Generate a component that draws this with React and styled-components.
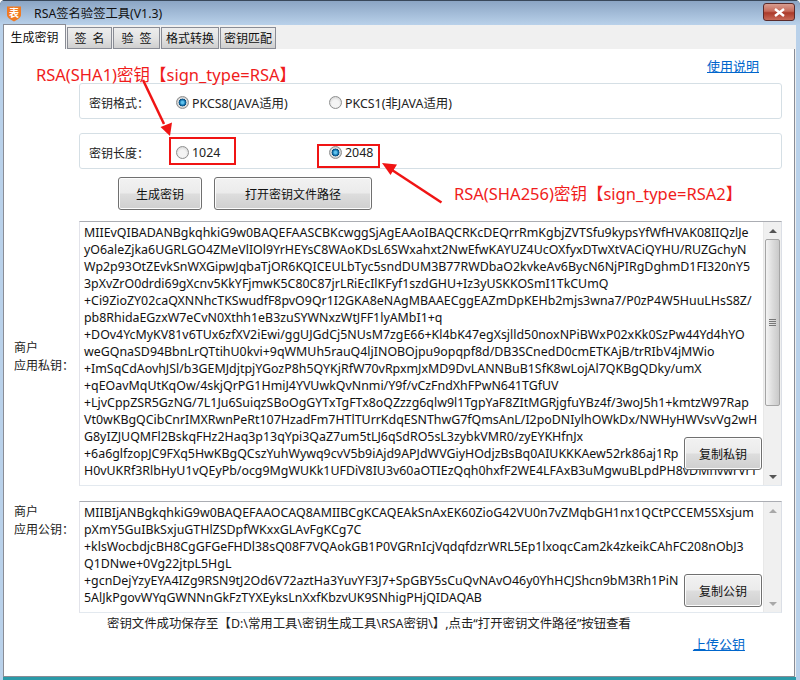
import React from 'react'
import styled, { createGlobalStyle } from 'styled-components'

const privateKey = [
  'MIIEvQIBADANBgkqhkiG9w0BAQEFAASCBKcwggSjAgEAAoIBAQCRKcDEQrrRmKgbjZVTSfu9kypsYfWfHVAK08IIQzlJe',
  'yO6aleZjka6UGRLGO4ZMeVlIOl9YrHEYsC8WAoKDsL6SWxahxt2NwEfwKAYUZ4UcOXfyxDTwXtVACiQYHU/RUZGchyN',
  'Wp2p93OtZEvkSnWXGipwJqbaTjOR6KQICEULbTyc5sndDUM3B77RWDbaO2kvkeAv6BycN6NjPIRgDghmD1FI320nY5',
  '3pXvZrO0drdi69gXcnv5KkYFjmwK5C80C87jrLRiEcIlKFyf1szdGHU+Iz3yUSKKOSmI1TkCUmQ',
  '+Ci9ZioZY02caQXNNhcTKSwudfF8pvO9Qr1I2GKA8eNAgMBAAECggEAZmDpKEHb2mjs3wna7/P0zP4W5HuuLHsS8Z/',
  'pb8RhidaEGzxW7eCvN0Xthh1eB3zuSYWNxzWtJFF1lyAMbI1+q',
  '+DOv4YcMyKV81v6TUx6zfXV2iEwi/ggUJGdCj5NUsM7zgE66+Kl4bK47egXsjlld50noxNPiBWxP02xKk0SzPw44Yd4hYO',
  'weGQnaSD94BbnLrQTtihU0kvi+9qWMUh5rauQ4ljINOBOjpu9opqpf8d/DB3SCnedD0cmETKAjB/trRIbV4jMWio',
  '+ImSqCdAovhJSl/b3GEMJdjtpjYGozP8h5QYKjRfW70vRpxmJxMD9DvLANNBuB1SfK8wLojAl7QKBgQDky/umX',
  '+qEOavMqUtKqOw/4skjQrPG1HmiJ4YVUwkQvNnmi/Y9f/vCzFndXhFPwN641TGfUV',
  '+LjvCppZSR5GzNG/7L1Ju6SuiqzSBoOgGYTxTgFTx8oQZzzg6qlw9l1TgpYaF8ZItMGRjgfuYBz4f/3woJ5h1+kmtzW97Rap',
  'Vt0wKBgQCibCnrIMXRwnPeRt107HzadFm7HTlTUrrKdqESNThwG7fQmsAnL/I2poDNIylhOWkDx/NWHyHWVsvVg2wH',
  'G8yIZJUQMFl2BskqFHz2Haq3p13qYpi3QaZ7um5tLJ6qSdRO5sL3zybkVMR0/zyEYKHfnJx',
  '+6a6glfzopJC9FXq5HwKBgQCszYuhWywq9cvV5b9iAjd9APJdWVGiyHOdjzBsBq0AIUKKKAew52rk86aj1Rp',
  'H0vUKRf3RlbHyU1vQEyPb/ocg9MgWUKk1UFDiV8IU3v60aOTIEzQqh0hxfF2WE4LFAxB3uMgwuBLpdPH8vDMnvwrVrT',
]

const publicKey = [
  'MIIBIjANBgkqhkiG9w0BAQEFAAOCAQ8AMIIBCgKCAQEAkSnAxEK60ZioG42VU0n7vZMqbGH1nx1QCtPCCEM5SXsjum',
  'pXmY5GuIBkSxjuGTHlZSDpfWKxxGLAvFgKCg7C',
  '+klsWocbdjcBH8CgGFGeFHDl38sQ08F7VQAokGB1P0VGRnIcjVqdqfdzrWRL5Ep1lxoqcCam2k4zkeikCAhFC208nObJ3',
  'Q1DNwe+0Vg22jtpL5HgL',
  '+gcnDejYzyEYA4IZg9RSN9tJ2Od6V72aztHa3YuvYF3J7+SpGBY5sCuQvNAvO46y0YhHCJShcn9bM3Rh1PiN',
  '5AlJkPgovWYqGWNNnGkFzTYXEyksLnXxfKbzvUK9SNhigPHjQIDAQAB',
]

const tabs = ['生成密钥', '签  名', '验  签', '格式转换', '密钥匹配']
const tabWidths = [63, 45, 47, 58, 56]

const GlobalStyle = createGlobalStyle`
  html, body { margin: 0; padding: 0; background: #fff; }
  body { font-family: "Noto Sans", "Noto Sans CJK SC", sans-serif; font-size: 12px; color: #111; }
`

const Win = styled.div`
  position: relative;
  width: 800px;
  height: 680px;
  overflow: hidden;
  display: flex;
  flex-direction: column;
  background: #f0f0f0;
  border-radius: 5px 5px 0 0;
  box-shadow: inset 0 0 0 1px #3e5a72;
`

const TitleBar = styled.div`
  height: 25px;
  flex: none;
  display: flex;
  align-items: center;
  padding: 0 3px 0 7px;
  background: linear-gradient(#8ba5c4, #b9d1ea);
  border-top: 1px solid #39485a;
  box-sizing: border-box;
`

const TitleText = styled.span`
  margin-left: 13px;
  font-size: 12.3px;
  color: #111;
`

const CloseButton = styled.div`
  margin-left: auto;
  margin-right: 2px;
  margin-top: -2px;
  width: 30px;
  height: 16px;
  display: flex;
  align-items: center;
  justify-content: center;
  border: 1px solid #5a2a2a;
  border-radius: 3px;
  background: linear-gradient(#d99d90 0%, #c66a5a 45%, #ab3a2a 55%, #c86a58 100%);
`

const Body = styled.div`
  flex: 1;
  display: flex;
  flex-direction: column;
  padding: 0 5px 3px 3px;
  min-height: 0;
  box-shadow: inset 3px 0 0 #b9d1ea, inset -4px 0 0 #b9d1ea, inset 0 -3px 0 #2a9aa8;
`

const TabStrip = styled.div`
  height: 24px;
  flex: none;
  display: flex;
  align-items: flex-end;
  gap: 1px;
  background: #f0f0f0;
  margin-bottom: -1px;
  position: relative;
  z-index: 1;
`

const Tab = styled.div`
  box-sizing: border-box;
  width: ${p => p.$w}px;
  height: ${p => (p.$active ? 25 : 22)}px;
  display: flex;
  align-items: center;
  justify-content: center;
  white-space: pre;
  border: 1px solid #898c95;
  border-bottom: ${p => (p.$active ? '0' : '1px solid #898c95')};
  background: ${p => (p.$active ? '#fff' : 'linear-gradient(#ededed, #e3e3e3 50%, #cfcfcf)')};
`

const Panel = styled.div`
  flex: 1;
  min-height: 0;
  background: #fff;
  border: 1px solid #898c95;
  box-sizing: border-box;
  display: flex;
  flex-direction: column;
  padding-left: 75px;
  padding-right: 12px;
`

const TopLink = styled.a`
  align-self: flex-end;
  margin: 8px 23px 7px 0;
  color: #0066cc;
  text-decoration: underline;
  font-size: 13px;
  line-height: 19px;
`

const GroupBox = styled.div`
  box-sizing: border-box;
  height: 36px;
  display: flex;
  align-items: center;
  padding: 3px 0 0 9px;
  margin-bottom: 14px;
  border: 1px solid #d5dfe5;
  border-radius: 3px;
`

const FieldName = styled.span`
  width: 87px;
  flex: none;
  color: #222;
`

const RadioItem = styled.label`
  width: ${p => p.$w}px;
  flex: none;
  display: flex;
  align-items: center;
  gap: 3px;
  color: #222;
  font-size: 12.4px;
`

const RadioDot = styled.span`
  width: 13px;
  height: 13px;
  flex: none;
  border-radius: 50%;
  border: 1px solid #8e8f8f;
  box-sizing: border-box;
  background: ${p =>
    p.$on
      ? 'radial-gradient(circle closest-side, #5ec2ee 0 22%, #0f6da8 50%, #0b4a78 68%, #e4e4e4 76%, #c8c8c8 100%)'
      : 'radial-gradient(circle at 50% 60%, #f4f4f4 0 40%, #c9c9c9 100%)'};
`

const ButtonRow = styled.div`
  display: flex;
  gap: 12px;
  margin: -6px 0 0 39px;
`

const WinButton = styled.button`
  box-sizing: border-box;
  width: ${p => p.$w}px;
  height: 33px;
  padding: 0;
  font: inherit;
  color: #111;
  border: 1px solid #707070;
  border-radius: 3px;
  background: linear-gradient(#f2f2f2 0%, #ebebeb 48%, #dddddd 52%, #cfcfcf 100%);
  box-shadow: inset 0 0 0 1px #fcfcfc;
`

const KeySection = styled.div`
  position: relative;
  margin-top: ${p => p.$top}px;
`

const SideLabel = styled.div`
  position: absolute;
  left: -65px;
  top: ${p => p.$top}px;
  line-height: 18px;
  color: #222;
  white-space: nowrap;
`

const KeyBox = styled.div`
  position: relative;
  box-sizing: border-box;
  height: ${p => p.$h}px;
  border: 1px solid #abadb3;
  border-right-color: #dbdfe6;
  border-bottom-color: #e3e9ef;
  border-left-color: #e2e3ea;
  overflow: hidden;
  display: flex;
`

const KeyText = styled.div`
  flex: 1;
  min-width: 0;
  padding: 2px 0 0 4px;
  font-size: 12.4px;
  line-height: 17px;
  white-space: pre;
  color: #111;
`

const ScrollBar = styled.div`
  width: 17px;
  flex: none;
  display: flex;
  flex-direction: column;
  background: #f0f0f0;
  border-left: 1px solid #e8e8e8;
`

const ScrollArrow = styled.div`
  height: 17px;
  flex: none;
  display: flex;
  align-items: center;
  justify-content: center;
  color: ${p => (p.$dim ? '#a8a8a8' : '#555')};
  font-size: 0;
  &::before {
    content: '';
    border-left: 4px solid transparent;
    border-right: 4px solid transparent;
    ${p => (p.$down ? 'border-top' : 'border-bottom')}: 4px solid currentColor;
  }
`

const ScrollThumb = styled.div`
  height: 167px;
  flex: none;
  margin: 0 1px;
  display: flex;
  flex-direction: column;
  align-items: center;
  justify-content: center;
  gap: 1px;
  box-sizing: border-box;
  border: 1px solid #a5a5a5;
  border-radius: 2px;
  background: linear-gradient(90deg, #f4f4f4, #dcdcdc 50%, #c9c9c9);
  span { width: 7px; height: 1px; background: #777; }
`

const ScrollGap = styled.div`
  flex: 1;
`

const CopyButton = styled(WinButton)`
  position: absolute;
  right: 20px;
  top: ${p => p.$top}px;
`

const StatusRow = styled.div`
  display: flex;
  margin-top: 1px;
  height: 40px;
`

const Status = styled.span`
  margin-left: 28px;
  line-height: 20px;
  font-size: 12.4px;
  color: #222;
  white-space: nowrap;
`

const BottomLink = styled(TopLink)`
  margin: 1px 0 0 62px;
`

const RedLabel = styled.div`
  position: absolute;
  left: ${p => p.$x}px;
  top: ${p => p.$y}px;
  color: #f01c1c;
  font-size: 16.5px;
  line-height: 22px;
  white-space: nowrap;
`

const RedBox = styled.div`
  position: absolute;
  left: ${p => p.$x}px;
  top: ${p => p.$y}px;
  width: ${p => p.$w}px;
  height: ${p => p.$h}px;
  box-sizing: border-box;
  border: 2px solid #f01414;
`

const ArrowLayer = styled.svg`
  position: absolute;
  left: 0;
  top: 0;
  pointer-events: none;
`

const Logo = () => (
  <svg width="14" height="17" viewBox="0 0 14 17">
    <path d="M0 1.500h14v8.500c0 2.500-3.500 4.500-7 6.500-3.500-2-7-4-7-6.500z" fill="#f07a22" />
    <text x="7" y="11.500" textAnchor="middle" fontSize="10" fontWeight="700" fill="#fff" fontFamily="Noto Sans CJK SC">表</text>
  </svg>
)

const CloseIcon = () => (
  <svg width="13" height="9" viewBox="0 0 13 9">
    <path d="M2 1l9 7M11 1L2 8" stroke="#fff" strokeWidth="2.400" />
  </svg>
)

const Scroll = ({ thumb }) => (
  <ScrollBar>
    <ScrollArrow $dim={!thumb} />
    {thumb ? (
      <ScrollThumb>
        <span /><span /><span /><span />
      </ScrollThumb>
    ) : null}
    <ScrollGap />
    <ScrollArrow $down $dim={!thumb} />
  </ScrollBar>
)

const App = () => {
  return (
    <Win>
      <GlobalStyle />
      <TitleBar>
        <Logo />
        <TitleText>RSA签名验签工具(V1.3)</TitleText>
        <CloseButton><CloseIcon /></CloseButton>
      </TitleBar>
      <Body>
        <TabStrip>
          {tabs.map((t, i) => (
            <Tab key={t} $active={i === 0} $w={tabWidths[i]}>{t}</Tab>
          ))}
        </TabStrip>
        <Panel>
          <TopLink>使用说明</TopLink>
          <GroupBox>
            <FieldName>密钥格式：</FieldName>
            <RadioItem $w={153}><RadioDot $on />PKCS8(JAVA适用)</RadioItem>
            <RadioItem $w={160}><RadioDot />PKCS1(非JAVA适用)</RadioItem>
          </GroupBox>
          <GroupBox>
            <FieldName>密钥长度：</FieldName>
            <RadioItem $w={153}><RadioDot />1024</RadioItem>
            <RadioItem $w={160}><RadioDot $on />2048</RadioItem>
          </GroupBox>
          <ButtonRow>
            <WinButton $w={84}>生成密钥</WinButton>
            <WinButton $w={158}>打开密钥文件路径</WinButton>
          </ButtonRow>
          <KeySection $top={11}>
            <SideLabel $top={118}>商户<br />应用私钥：</SideLabel>
            <KeyBox $h={265}>
              <KeyText>{privateKey.join('\n')}</KeyText>
              <Scroll thumb />
            </KeyBox>
            <CopyButton $w={78} $top={216}>复制私钥</CopyButton>
          </KeySection>
          <KeySection $top={15}>
            <SideLabel $top={2}>商户<br />应用公钥：</SideLabel>
            <KeyBox $h={112}>
              <KeyText>{publicKey.join('\n')}</KeyText>
              <Scroll />
            </KeyBox>
            <CopyButton $w={78} $top={73}>复制公钥</CopyButton>
          </KeySection>
          <StatusRow>
            <Status>密钥文件成功保存至【D:\常用工具\密钥生成工具\RSA密钥\】,点击“打开密钥文件路径”按钮查看</Status>
            <BottomLink>上传公钥</BottomLink>
          </StatusRow>
        </Panel>
      </Body>

      <RedLabel $x={36} $y={64}>RSA(SHA1)密钥【sign_type=RSA】</RedLabel>
      <RedLabel $x={454} $y={183}>RSA(SHA256)密钥【sign_type=RSA2】</RedLabel>
      <RedBox $x={169} $y={137} $w={67} $h={28} />
      <RedBox $x={317} $y={144} $w={63} $h={24} />
      <ArrowLayer width="800" height="680">
        <path d="M143 80L164 124" stroke="#f01414" strokeWidth="2.500" />
        <path d="M170 136L160.500 127L172 122.500z" fill="#f01414" />
        <path d="M441.500 202.500L392 170" stroke="#f01414" strokeWidth="2.500" />
        <path d="M382 163L397 164.500L390.500 175z" fill="#f01414" />
      </ArrowLayer>
    </Win>
  )
}

export default App
